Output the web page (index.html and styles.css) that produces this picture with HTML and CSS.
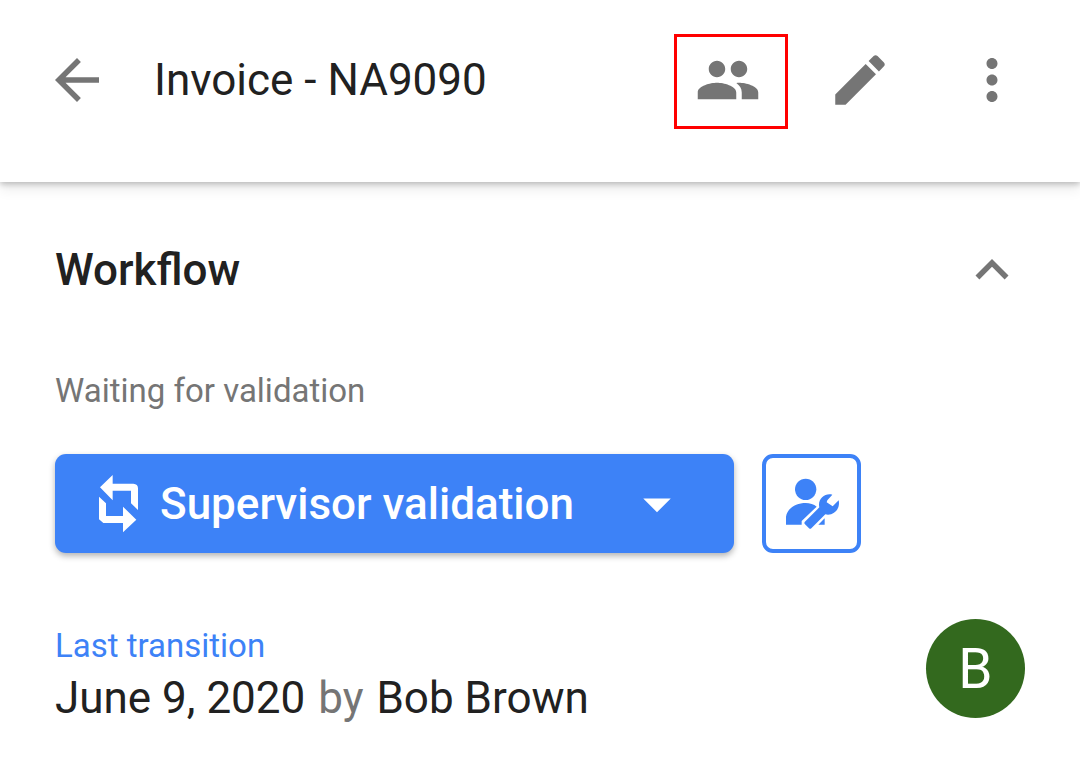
FILE: index.html
```html
<!DOCTYPE html>
<html lang="en">
<head>
<meta charset="utf-8">
<meta name="viewport" content="width=device-width, initial-scale=1">
<title>Invoice - NA9090</title>
<link rel="stylesheet" href="styles.css">
</head>
<body>
<header class="app-bar">
  <button class="icon-button" type="button" aria-label="Back">
    <svg class="icon" viewBox="0 0 24 24"><path d="M20 11H7.83l5.59-5.59L12 4l-8 8 8 8 1.41-1.41L7.83 13H20v-2z"/></svg>
  </button>
  <h1 class="title">Invoice - NA9090</h1>
  <button class="icon-button highlighted" type="button" aria-label="Assigned people">
    <svg class="icon" viewBox="0 0 24 24"><path d="M16 11c1.66 0 2.99-1.34 2.99-3S17.66 5 16 5c-1.66 0-3 1.34-3 3s1.34 3 3 3zm-8 0c1.66 0 2.99-1.34 2.99-3S9.66 5 8 5C6.34 5 5 6.34 5 8s1.34 3 3 3zm0 2c-2.33 0-7 1.17-7 3.5V19h14v-2.500c0-2.330-4.670-3.500-7-3.500zm8 0c-.29 0-.62.02-.97.05 1.160.84 1.970 1.970 1.970 3.450V19h6v-2.500c0-2.330-4.670-3.500-7-3.500z"/></svg>
  </button>
  <button class="icon-button" type="button" aria-label="Edit">
    <svg class="icon" viewBox="0 0 24 24"><path d="M3 17.250V21h3.750L17.810 9.940l-3.750-3.750L3 17.250zM20.710 7.040c.39-.39.39-1.020 0-1.410l-2.340-2.340c-.39-.39-1.020-.39-1.410 0l-1.830 1.830 3.750 3.750 1.830-1.830z"/></svg>
  </button>
  <button class="icon-button" type="button" aria-label="More options">
    <svg class="icon" viewBox="0 0 24 24"><path d="M12 8c1.100 0 2-.9 2-2s-.9-2-2-2-2 .9-2 2 .9 2 2 2zm0 2c-1.100 0-2 .9-2 2s.9 2 2 2 2-.9 2-2-.9-2-2-2zm0 6c-1.100 0-2 .9-2 2s.9 2 2 2 2-.9 2-2-.9-2-2-2z"/></svg>
  </button>
</header>
<main class="content">
  <div class="section-head">
    <h2 class="section-title">Workflow</h2>
    <button class="icon-button" type="button" aria-label="Collapse section">
      <svg class="icon" viewBox="0 0 24 24"><path d="M12 8l-6 6 1.410 1.410L12 10.830l4.590 4.580L18 14z"/></svg>
    </button>
  </div>
  <p class="status">Waiting for validation</p>
  <div class="actions">
    <button class="primary" type="button">
      <svg class="icon" viewBox="135 93 198 198"><path d="M180 142L218 105V131H280Q294 132 294 145V210L273 190V152H218V181zM177 170L198 190V228H249V200L289 239L249 277V249H190L177 238z"/></svg>
      <span class="primary-label">Supervisor validation</span>
      <svg class="icon" viewBox="0 0 24 24"><path d="M7 10l5 5 5-5z"/></svg>
    </button>
    <button class="outlined" type="button" aria-label="Manage assignee">
      <svg class="icon" viewBox="535 93 198 198"><circle cx="618" cy="148" r="32"/><path d="M559 254V230C562 205 590 189 618 189C630 189 643 193 651 200L606 243V254zM656 254L675 235V254zM698 164C675 158 653 178 659 202L615 246Q613 250 616 253L628 265Q632 268 635 265L677 223C701 229 723 207 717 181L699 199L681 187L683 181z"/></svg>
    </button>
  </div>
  <section class="transition">
    <div class="transition-text">
      <h3 class="transition-label">Last transition</h3>
      <p class="transition-value">June 9, 2020 <span class="muted">by</span> Bob Brown</p>
    </div>
    <div class="avatar">B</div>
  </section>
</main>
</body>
</html>
```
FILE: styles.css
```css
*,
*::after {
  box-sizing: border-box;
}

body {
  margin: 0;
  background: #fff;
  color: #212121;
  font-family: Roboto, "Liberation Sans", sans-serif;
  font-size: 44px;
  line-height: 52px;
}

h1, h2, h3, p {
  margin: 0;
  font-size: 44px;
  font-weight: 400;
}

button {
  border: 0;
  padding: 0;
  background: none;
  color: inherit;
  font: inherit;
  cursor: pointer;
}

.icon {
  flex: none;
  display: block;
  width: 66px;
  height: 66px;
  fill: currentColor;
}

.app-bar {
  display: flex;
  align-items: center;
  padding: 14px 22px 36px 11px;
  box-shadow: 0 2px 6px rgba(0, 0, 0, 0.24), 0 8px 12px rgba(0, 0, 0, 0.07);
}

.icon-button {
  position: relative;
  flex: none;
  display: grid;
  place-items: center;
  width: 132px;
  height: 132px;
  color: #757575;
}

.title {
  flex: 1;
  padding-left: 11px;
}

.highlighted::after {
  content: "";
  position: absolute;
  top: 20px;
  left: 12px;
  width: 114px;
  height: 95px;
  border: 3px solid #f00;
}

.content {
  padding: 22px 55px 55px;
}

.section-head {
  display: flex;
  align-items: center;
  justify-content: space-between;
  margin-right: -33px;
}

.section-title {
  font-weight: 500;
}

.status {
  margin-top: 35px;
  color: #757575;
  font-size: 33px;
  line-height: 40px;
}

.actions {
  display: flex;
  gap: 28px;
  margin-top: 43px;
}

.primary {
  display: flex;
  align-items: center;
  height: 99px;
  padding: 0 44px 0 30px;
  border-radius: 11px;
  background: #3d82f7;
  box-shadow: 0 3px 6px rgba(0, 0, 0, 0.3);
  color: #fff;
  font-weight: 500;
}

.primary-label {
  padding: 0 50px 0 9px;
}

.outlined {
  display: grid;
  place-items: center;
  width: 99px;
  height: 99px;
  border: 4px solid #3d82f7;
  border-radius: 11px;
  color: #3d82f7;
}

.transition {
  display: flex;
  align-items: flex-start;
  justify-content: space-between;
  margin-top: 66px;
}

.transition-text {
  padding-top: 1px;
}

.transition-label {
  color: #3d82f7;
  font-size: 33px;
}

.muted {
  margin: 0 2px;
  color: #757575;
}

.avatar {
  display: grid;
  place-items: center;
  width: 99px;
  height: 99px;
  border-radius: 50%;
  background: #33691e;
  color: #fff;
  font-size: 55px;
}
```
